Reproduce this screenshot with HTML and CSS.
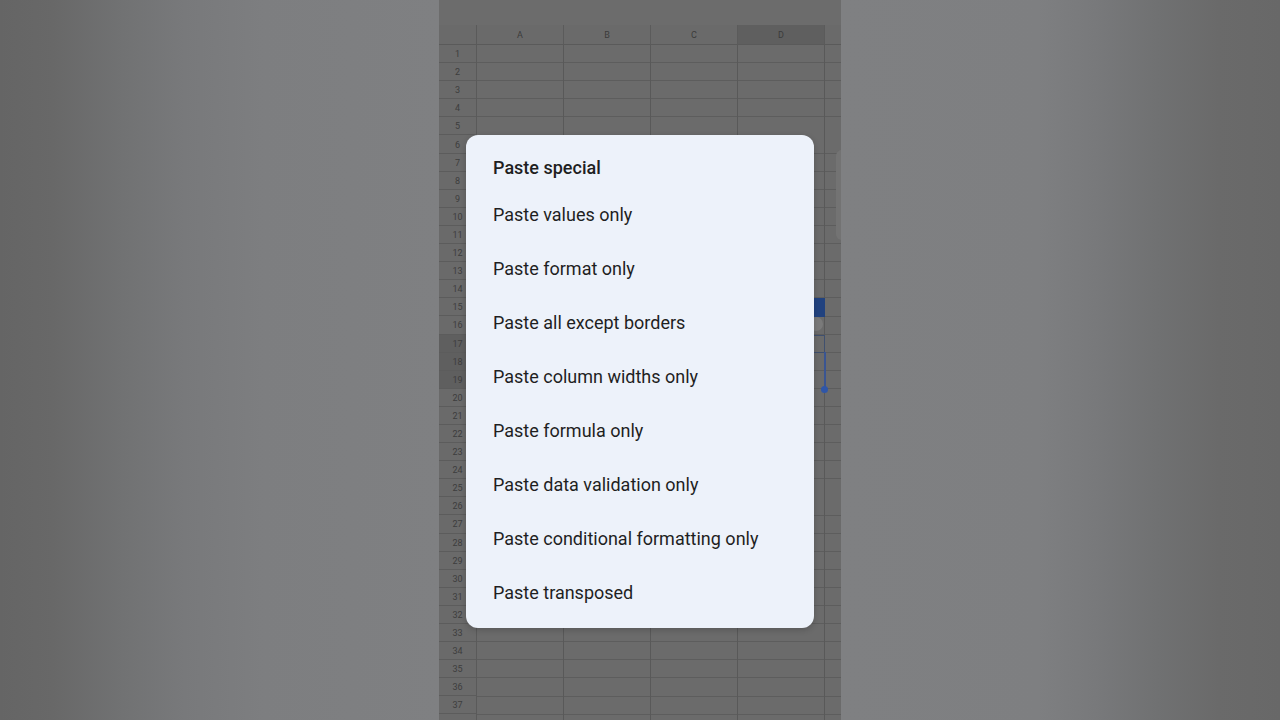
FILE: index.html
```html
<!DOCTYPE html>
<html lang="en">
<head>
<meta charset="utf-8">
<title>Paste special</title>
<link rel="stylesheet" href="styles.css">
</head>
<body>
<div class="page">
  <div class="side side-left"></div>
  <div class="phone">
    <div class="topbar"></div>
    <div class="sheet">
      <div class="corner"></div>
      <div class="col-heads">
        <div class="col-head">A</div>
        <div class="col-head">B</div>
        <div class="col-head">C</div>
        <div class="col-head sel">D</div>
        <div class="col-head narrow"></div>
      </div>
      <div class="row-heads">
        <div class="row-head">1</div><div class="row-head">2</div><div class="row-head">3</div><div class="row-head">4</div>
        <div class="row-head">5</div><div class="row-head">6</div><div class="row-head">7</div><div class="row-head">8</div>
        <div class="row-head">9</div><div class="row-head">10</div><div class="row-head">11</div><div class="row-head">12</div>
        <div class="row-head">13</div><div class="row-head">14</div><div class="row-head">15</div><div class="row-head">16</div>
        <div class="row-head sel">17</div><div class="row-head sel">18</div><div class="row-head sel">19</div><div class="row-head">20</div>
        <div class="row-head">21</div><div class="row-head">22</div><div class="row-head">23</div><div class="row-head">24</div>
        <div class="row-head">25</div><div class="row-head">26</div><div class="row-head">27</div><div class="row-head">28</div>
        <div class="row-head">29</div><div class="row-head">30</div><div class="row-head">31</div><div class="row-head">32</div>
        <div class="row-head">33</div><div class="row-head">34</div><div class="row-head">35</div><div class="row-head">36</div>
        <div class="row-head">37</div><div class="row-head"></div>
      </div>
      <div class="cells"></div>
    </div>

    <div class="sel-fill"></div>
    <div class="sel-knob"></div>
    <div class="sel-box"></div>
    <div class="sel-line"></div>
    <div class="sel-dot"></div>
    <div class="float-panel"></div>

    <div class="dialog">
      <div class="dialog-title">Paste special</div>
      <ul class="options">
        <li class="option">Paste values only</li>
        <li class="option">Paste format only</li>
        <li class="option">Paste all except borders</li>
        <li class="option">Paste column widths only</li>
        <li class="option">Paste formula only</li>
        <li class="option">Paste data validation only</li>
        <li class="option">Paste conditional formatting only</li>
        <li class="option">Paste transposed</li>
      </ul>
    </div>
  </div>
  <div class="side side-right"></div>
</div>
</body>
</html>
```

FILE: styles.css
```css
* { box-sizing: border-box; }
html, body { margin: 0; padding: 0; }
body {
  width: 1280px;
  height: 720px;
  overflow: hidden;
  font-family: Roboto, "Noto Sans", "Liberation Sans", sans-serif;
  background: #7a7b7d;
}
.page {
  display: flex;
  width: 1280px;
  height: 720px;
}
.side { flex: 0 0 439px; height: 720px; }
.side-left {
  background: linear-gradient(to right, #656565 0%, #686868 12%, #717273 28%, #78797b 42%, #7d7e80 60%, #7f8082 100%);
}
.side-right {
  background: linear-gradient(to right, #7f8082 0%, #7e7f81 45%, #78797b 58%, #707172 72%, #6a6a6a 86%, #686868 100%);
}
.phone {
  position: relative;
  flex: 0 0 402px;
  height: 720px;
  overflow: hidden;
  background: #6c6c6c;
}
.topbar {
  height: 25px;
  background: #6c6c6c;
}
.sheet {
  display: grid;
  grid-template-columns: 38px 1fr;
  grid-template-rows: 20px 1fr;
  height: 695px;
  background: #6b6b6b;
}
.corner {
  background: #6a6a6a;
  border-right: 1px solid #5a5a5a;
  border-bottom: 1px solid #5a5a5a;
}
.col-heads {
  display: flex;
  background: #6a6a6a;
  border-bottom: 1px solid #5a5a5a;
}
.col-head {
  flex: 0 0 87px;
  border-right: 1px solid #5b5b5b;
  font-size: 9px;
  color: #3b3b3b;
  display: flex;
  align-items: center;
  justify-content: center;
}
.col-head.narrow { flex: 1 1 auto; border-right: none; }
.col-head.sel { background: #5f5f5f; }
.row-heads {
  display: flex;
  flex-direction: column;
  background: #6a6a6a;
  border-right: 1px solid #5a5a5a;
}
.row-head {
  flex: 0 0 18.1px;
  border-bottom: 1px solid #5c5c5c;
  font-size: 9px;
  color: #3d3d3d;
  display: flex;
  align-items: center;
  justify-content: center;
  padding-top: 1px;
}
.row-head.sel { background: #5f5f5f; }
.cells {
  background-color: #6b6b6b;
  background-image:
    repeating-linear-gradient(to right, transparent 0, transparent 86px, #595959 86px, #595959 87px),
    repeating-linear-gradient(to bottom, transparent 0, transparent 17.1px, #5d5d5d 17.1px, #5d5d5d 18.1px);
}

/* selection marks on column D (mostly under the dialog) */
.sel-fill {
  position: absolute;
  left: 370px; top: 298px;
  width: 16px; height: 19px;
  background: #21427f;
}
.sel-knob {
  position: absolute;
  left: 370px; top: 317px;
  width: 14px; height: 14px;
  border-radius: 50%;
  background: #7a7a7a;
}
.sel-box {
  position: absolute;
  left: 366px; top: 335px;
  width: 20px; height: 18px;
  border: 1.5px solid #40506e;
}
.sel-line {
  position: absolute;
  left: 385px; top: 352px;
  width: 1.5px; height: 37px;
  background: #3a5592;
}
.sel-dot {
  position: absolute;
  left: 381.5px; top: 385.5px;
  width: 7px; height: 7px;
  border-radius: 50%;
  background: #2f56a8;
}
.float-panel {
  position: absolute;
  left: 397px; top: 150px;
  width: 14px; height: 90px;
  border-radius: 6px;
  background: #737373;
}

/* dialog */
.dialog {
  position: absolute;
  left: 27px; top: 135px;
  width: 348px; height: 493px;
  background: #edf2fa;
  border-radius: 12px;
  padding: 12px 0 9px;
  box-shadow: 0 2px 6px rgba(0,0,0,0.18);
  color: #1f1f1f;
}
.dialog-title {
  height: 40px;
  display: flex;
  align-items: center;
  padding-left: 27px;
  font-size: 18px;
  font-weight: 500;
}
.options {
  list-style: none;
  margin: 0;
  padding: 0;
}
.option {
  height: 54px;
  display: flex;
  align-items: center;
  padding-left: 27px;
  padding-top: 1px;
  font-size: 18px;
  font-weight: 400;
}
```
